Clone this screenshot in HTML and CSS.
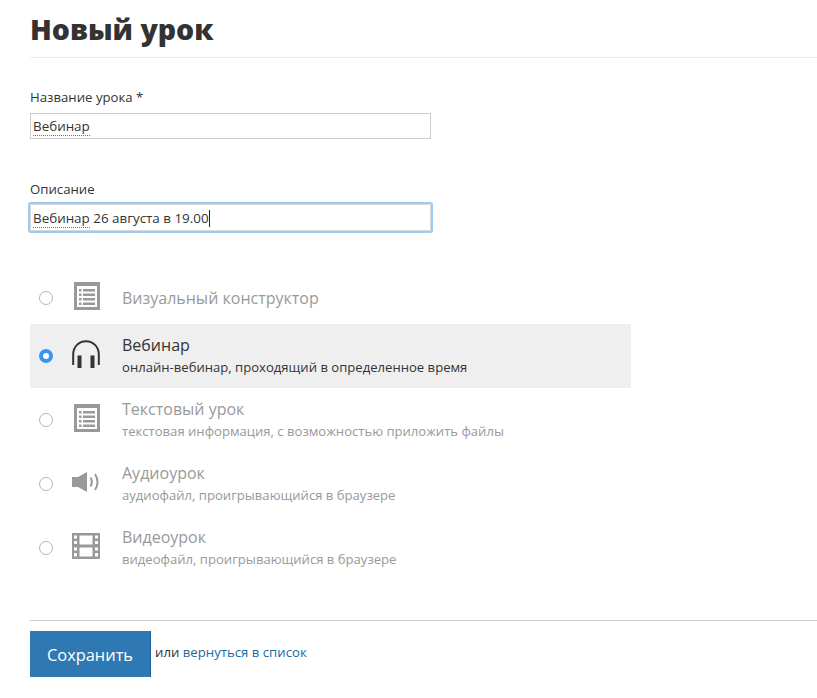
FILE: index.html
```html
<!DOCTYPE html>
<html lang="ru">
<head>
<meta charset="utf-8">
<title>Новый урок</title>
<link rel="stylesheet" href="styles.css">
</head>
<body>
<main class="page">
  <h1 class="title">Новый урок</h1>
  <div class="field field-name">
    <label class="label">Название урока *</label>
    <div class="input"><span class="misspelled">Вебинар</span></div>
  </div>
  <div class="field field-desc">
    <label class="label">Описание</label>
    <div class="input input-focus"><span class="misspelled">Вебинар</span> 26 августа в 19.00<span class="caret"></span></div>
  </div>
  <div class="types">
    <div class="type type-plain">
      <span class="radio"></span>
      <span class="icon-box"><svg class="icon icon-doc" viewBox="0 0 26 28"><path fill="#999" fill-rule="evenodd" d="M0 0h26v28H0zM3 4v21h20V4z"/><path fill="#999" d="M5 7h2.500v2.500H5zM9 7h12v2.500H9zM5 11.500h2.500V14H5zM9 11.500h12V14H9zM5 16h2.500v2.500H5zM9 16h12v2.500H9zM5 20.500h2.500V23H5zM9 20.500h12V23H9z"/></svg></span>
      <div class="type-text"><div class="type-name">Визуальный конструктор</div></div>
    </div>
    <div class="type type-active">
      <span class="radio radio-on"></span>
      <span class="icon-box"><svg class="icon icon-head" viewBox="0 0 28 28"><path fill="none" stroke="#333" stroke-width="2" d="M1.200 25V14.500C1.200 6.500 7 1.200 14 1.200S26.800 6.500 26.800 14.500V25"/><path fill="#333" d="M5.500 15.500h4V28h-4zM18.500 15.500h4V28h-4z"/></svg></span>
      <div class="type-text"><div class="type-name">Вебинар</div><div class="type-desc">онлайн-вебинар, проходящий в определенное время</div></div>
    </div>
    <div class="type">
      <span class="radio"></span>
      <span class="icon-box"><svg class="icon icon-doc" viewBox="0 0 26 28"><path fill="#999" fill-rule="evenodd" d="M0 0h26v28H0zM3 4v21h20V4z"/><path fill="#999" d="M5 7h2.500v2.500H5zM9 7h12v2.500H9zM5 11.500h2.500V14H5zM9 11.500h12V14H9zM5 16h2.500v2.500H5zM9 16h12v2.500H9zM5 20.500h2.500V23H5zM9 20.500h12V23H9z"/></svg></span>
      <div class="type-text"><div class="type-name">Текстовый урок</div><div class="type-desc">текстовая информация, с возможностью приложить файлы</div></div>
    </div>
    <div class="type">
      <span class="radio"></span>
      <span class="icon-box"><svg class="icon icon-audio" viewBox="0 0 27 20"><path fill="#999" d="M0 5h6l9-5v20l-9-5H0z"/><path fill="none" stroke="#999" stroke-width="2" d="M18.500 5.500c1.800 3 1.800 6 0 9M23 2c3.200 5 3.200 11 0 16"/></svg></span>
      <div class="type-text"><div class="type-name">Аудиоурок</div><div class="type-desc">аудиофайл, проигрывающийся в браузере</div></div>
    </div>
    <div class="type">
      <span class="radio"></span>
      <span class="icon-box"><svg class="icon icon-film" viewBox="0 0 28 26"><path fill="#999" fill-rule="evenodd" d="M0 0h28v26H0zM2 2.500v3h3v-3zM2 8v3h3V8zM2 14.500v3h3v-3zM2 20v3.500h3V20zM23 2.500v3h3v-3zM23 8v3h3V8zM23 14.500v3h3v-3zM23 20v3.500h3V20zM7.500 2.500V11.500h13V2.500zM7.500 14.500V23.500h13V14.500z"/></svg></span>
      <div class="type-text"><div class="type-name">Видеоурок</div><div class="type-desc">видеофайл, проигрывающийся в браузере</div></div>
    </div>
  </div>
  <div class="actions">
    <button class="save" type="button">Сохранить</button>
    <span class="or">или <a class="back" href="#">вернуться в список</a></span>
  </div>
</main>
</body>
</html>
```
FILE: styles.css
```css
html, body { margin: 0; padding: 0; background: #fff; }
body { font-family: "Open Sans", "Noto Sans", sans-serif; color: #333; overflow: hidden; }
.page { padding-left: 30px; height: 698px; box-sizing: border-box; }
.title { margin: 0; height: 57px; line-height: 58px; font-size: 28.500px; font-weight: 800; color: #333; border-bottom: 1px solid #eee; }
.field-name { margin-top: 30px; }
.field-desc { margin-top: 41px; }
.label { display: block; height: 25px; line-height: 19px; font-size: 13.200px; color: #333; }
.input { width: 401px; height: 26px; box-sizing: border-box; border: 1px solid #ccc; line-height: 24px; padding-left: 2px; font-size: 13.400px; color: #333; white-space: nowrap; }
.field-desc .label { height: 24px; }
.input-focus { height: 27px; line-height: 26px; border-color: #d8d8d8; box-shadow: 0 0 0 2px #9ccbf6; border-radius: 1px; }
.misspelled { padding-bottom: 1px; background: repeating-linear-gradient(90deg, #f03a32 0 1px, transparent 1px 2px) left bottom / 100% 1px no-repeat; }
.caret { display: inline-block; width: 1px; height: 17px; background: #222; vertical-align: -4px; }
.types { margin-top: 41px; width: 601px; }
.type { display: flex; align-items: center; height: 64px; color: #999; }
.type-plain { height: 52px; }
.type-active { background: #efefef; color: #333; }
.radio { flex: none; width: 14px; height: 14px; margin-left: 9px; box-sizing: border-box; border: 1px solid #b5b5b5; border-radius: 50%; background: #fff; }
.radio-on { border: 4.500px solid #3b93f2; }
.icon-box { flex: none; display: flex; width: 30px; margin-left: 19px; margin-bottom: 4px; }
.icon { display: block; flex: none; }
.icon-doc { width: 26px; height: 28px; margin-left: 2px; }
.icon-head { width: 28px; height: 28px; }
.icon-audio { width: 27px; height: 20px; }
.icon-film { width: 28px; height: 26px; }
.type-text { margin-left: 20px; }
.type-name { font-size: 16px; line-height: 22px; }
.type-desc { font-size: 13.100px; line-height: 22px; padding-bottom: 1px; }
.actions { display: flex; align-items: center; margin-top: 40px; border-top: 1px solid #ccc; padding-top: 10px; }
.save { width: 121px; height: 46px; border: 0; border-right: 1px solid #1f5f96; background: #2e79b4; color: #fff; font: inherit; font-size: 16.400px; padding: 0; }
.or { margin-left: 4px; margin-bottom: 4px; font-size: 13.200px; color: #333; }
.back { color: #1a69a4; text-decoration: none; }
```
